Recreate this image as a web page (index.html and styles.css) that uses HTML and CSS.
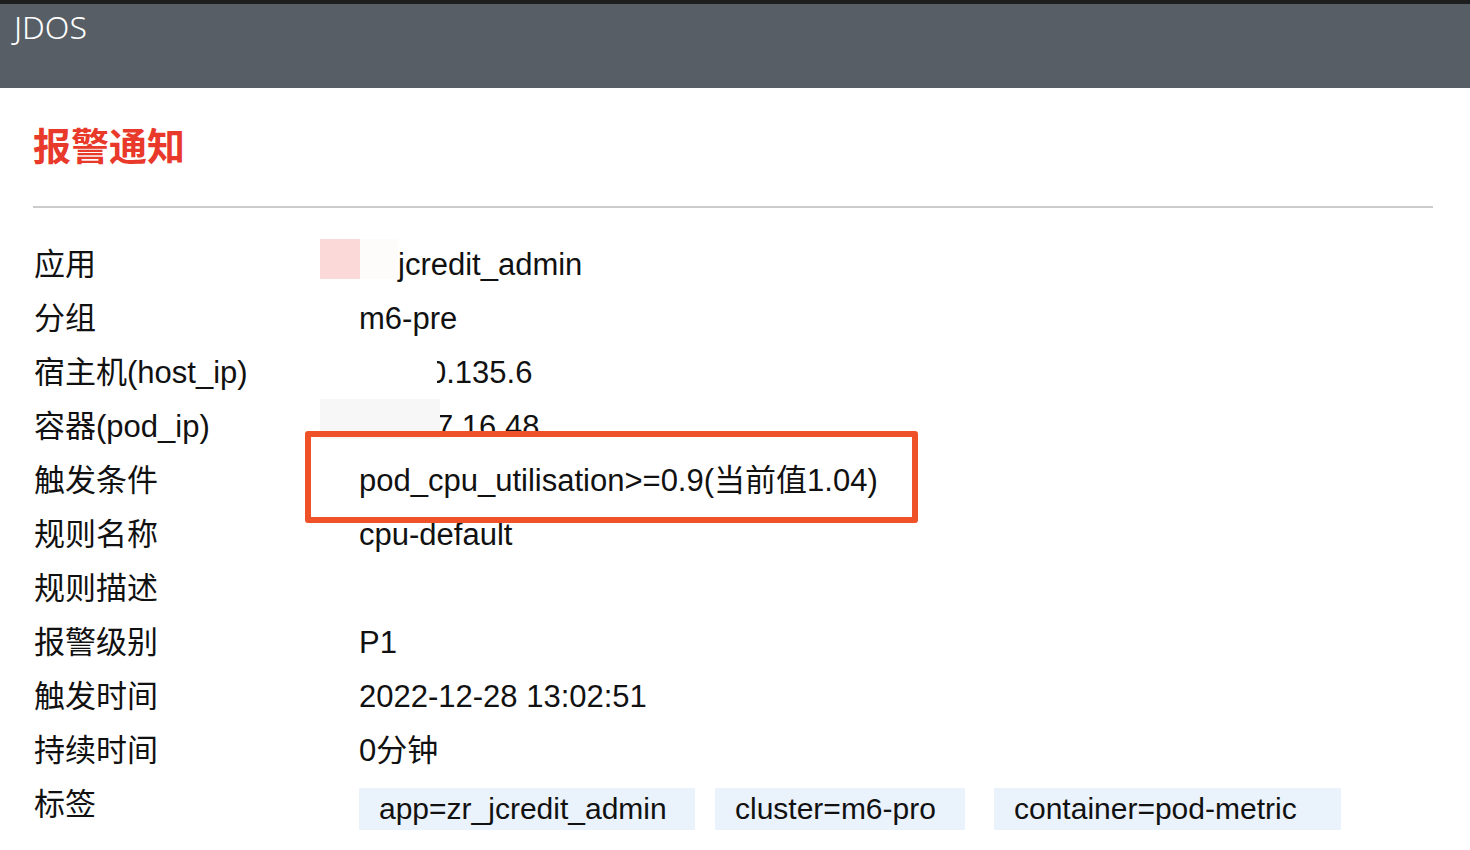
FILE: index.html
```html
<!DOCTYPE html>
<html lang="zh-CN">
<head>
<meta charset="utf-8">
<title>JDOS 报警通知</title>
<link rel="stylesheet" href="styles.css">
</head>
<body>
<header class="topbar"><span class="brand">JDOS</span></header>
<main class="content">
  <h1 class="title">报警通知</h1>
  <hr class="rule">
  <div class="table">
    <div class="row">
      <div class="label">应用</div>
      <div class="value"><span class="pad-39">jcredit_admin</span></div>
      <span class="mask mask-pink"></span>
      <span class="mask mask-white1"></span>
    </div>
    <div class="row">
      <div class="label">分组</div>
      <div class="value">m6-pre</div>
    </div>
    <div class="row">
      <div class="label">宿主机(host_ip)</div>
      <div class="value"><span class="pad-ip">0.135.6</span></div>
      <span class="mask mask-white2"></span>
    </div>
    <div class="row">
      <div class="label">容器(pod_ip)</div>
      <div class="value"><span class="pad-ip2">7.16.48</span></div>
      <span class="mask mask-gray"></span>
    </div>
    <div class="row">
      <div class="label">触发条件</div>
      <div class="value">pod_cpu_utilisation&gt;=0.9(当前值1.04)</div>
      <span class="highlight"></span>
    </div>
    <div class="row">
      <div class="label">规则名称</div>
      <div class="value">cpu-default</div>
    </div>
    <div class="row">
      <div class="label">规则描述</div>
      <div class="value"></div>
    </div>
    <div class="row">
      <div class="label">报警级别</div>
      <div class="value">P1</div>
    </div>
    <div class="row">
      <div class="label">触发时间</div>
      <div class="value">2022-12-28 13:02:51</div>
    </div>
    <div class="row">
      <div class="label">持续时间</div>
      <div class="value">0分钟</div>
    </div>
    <div class="row">
      <div class="label">标签</div>
      <div class="value tags">
        <span class="tag tag-app">app=zr_jcredit_admin</span>
        <span class="tag tag-cluster">cluster=m6-pro</span>
        <span class="tag tag-container">container=pod-metric</span>
      </div>
    </div>
  </div>
</main>
</body>
</html>
```

FILE: styles.css
```css
html, body {
  margin: 0;
  padding: 0;
  background: #ffffff;
}
body {
  font-family: "Liberation Sans", "Noto Sans CJK SC", sans-serif;
  color: #111111;
}
.topbar {
  border-top: 4px solid #1e1e1e;
  height: 84px;
  background: #575e66;
  padding-left: 14px;
}
.brand {
  display: block;
  color: #ffffff;
  font-family: "Noto Sans", sans-serif;
  font-size: 32px;
  font-weight: 300;
  line-height: 46px;
}
.content {
  margin-left: 33px;
  width: 1400px;
}
.title {
  margin: 31px 0 37px 0;
  height: 50px;
  line-height: 50px;
  font-family: "Noto Sans CJK SC", sans-serif;
  font-size: 38px;
  font-weight: 700;
  color: #e8392b;
}
.rule {
  margin: 0;
  border: 0;
  height: 2px;
  background: #cccccc;
}
.table {
  margin-top: 30px;
  margin-left: 1px;
}
.row {
  position: relative;
  display: flex;
  height: 54px;
  line-height: 54px;
  font-size: 31px;
}
.label {
  width: 325px;
  flex: none;
  white-space: nowrap;
}
.value {
  white-space: nowrap;
}
.pad-39 { padding-left: 39px; }
.pad-ip { padding-left: 70px; }
.pad-ip2 { padding-left: 77px; }
.mask {
  position: absolute;
  z-index: 2;
}
.mask-pink {
  left: 286px;
  top: 1px;
  width: 40px;
  height: 40px;
  background: #fbd9d8;
}
.mask-white1 {
  left: 326px;
  top: 1px;
  width: 38px;
  height: 40px;
  background: #fdfcfb;
}
.mask-white2 {
  left: 286px;
  top: 0;
  width: 117px;
  height: 54px;
  background: #ffffff;
}
.mask-gray {
  left: 286px;
  top: -1px;
  width: 120px;
  height: 40px;
  background: #f7f7f7;
}
.highlight {
  position: absolute;
  left: 271px;
  top: -23px;
  width: 601px;
  height: 80px;
  border: 6px solid #ef5228;
  border-radius: 3px;
  z-index: 3;
  pointer-events: none;
}
.tags {
  display: flex;
  align-items: center;
}
.tag {
  display: block;
  box-sizing: border-box;
  height: 42px;
  line-height: 42px;
  margin-top: 7px;
  padding-left: 20px;
  font-size: 30px;
  background: #eaf2fc;
}
.tag-app {
  width: 336px;
}
.tag-cluster {
  width: 250px;
  margin-left: 20px;
}
.tag-container {
  width: 347px;
  margin-left: 29px;
}
```
